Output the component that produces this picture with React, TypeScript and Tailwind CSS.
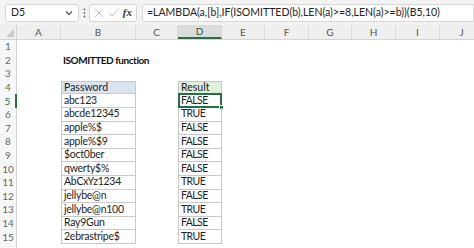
import React from "react";

const COLS = [
  { k: "A", w: 44 },
  { k: "B", w: 75 },
  { k: "C", w: 42 },
  { k: "D", w: 44 },
  { k: "E", w: 43 },
  { k: "F", w: 44 },
  { k: "G", w: 43 },
  { k: "H", w: 44 },
  { k: "I", w: 44 },
  { k: "J", w: 44 },
];

const DATA: [string, string][] = [
  ["abc123", "FALSE"],
  ["abcde12345", "TRUE"],
  ["apple%$", "FALSE"],
  ["apple%$9", "FALSE"],
  ["$oct0ber", "FALSE"],
  ["qwerty$%", "FALSE"],
  ["AbCxYz1234", "TRUE"],
  ["jellybe@n", "FALSE"],
  ["jellybe@n100", "TRUE"],
  ["Ray9Gun", "FALSE"],
  ["2ebrastripe$", "TRUE"],
];

const font = { fontFamily: "Lato, 'Liberation Sans', sans-serif" };

function Cell({ col, row }: { col: string; row: number }) {
  const w = COLS.find((c) => c.k === col)!.w;
  let content: React.ReactNode = null;
  let cls = "";
  if (col === "B" && row === 2) {
    content = (
      <span className="font-bold text-[10px] tracking-[-0.45px] text-[#111] whitespace-nowrap">
        ISOMITTED function
      </span>
    );
    cls = "overflow-visible whitespace-nowrap";
  }
  if (col === "B" && row === 4) {
    content = "Password";
    cls = "bg-[#dae4f0] border border-[#c8c8c8]";
  }
  if (col === "D" && row === 4) {
    content = "Result";
    cls = "bg-[#e1eedb] border border-[#c8c8c8]";
  }
  if (row >= 5 && row <= 15 && (col === "B" || col === "D")) {
    const d = DATA[row - 5];
    content =
      col === "B" ? (
        <span className="tracking-[-0.25px]">{d[0]}</span>
      ) : (
        <span className="tracking-[-0.6px]">{d[1]}</span>
      );
    cls = "border-x border-b border-[#c8c8c8]";
  }
  const selected = col === "D" && row === 5;
  return (
    <div
      className={`relative h-full shrink-0 flex items-center pl-[2px] text-[10.5px] text-[#1e1e1e] ${cls}`}
      style={{ width: w }}
    >
      {content}
      {selected && (
        <>
          <div className="absolute -inset-[1px] border-2 border-[#217346]" />
          <div className="absolute -right-[3px] -bottom-[3px] w-[5px] h-[5px] bg-[#217346] border border-white" />
        </>
      )}
    </div>
  );
}

export default function App() {
  const rows = Array.from({ length: 16 }, (_, i) => i + 1);
  return (
    <div className="w-[474px] h-[248px] overflow-hidden bg-white" style={font}>
      {/* formula bar */}
      <div className="h-[25px] bg-[#f3f3f3] flex items-center pl-[5px]">
        <div className="w-[74px] h-[18px] bg-white border border-[#d6d6d6] rounded-[3px] flex items-center pl-[5px] text-[10.5px] text-[#222]">
          <span className="flex-1">D5</span>
          <svg width="8" height="6" viewBox="0 0 8 6" className="mr-[5px]">
            <path d="M1 1.5 L4 4.5 L7 1.5" stroke="#444" strokeWidth="1.1" fill="none" />
          </svg>
        </div>
        <div className="w-[10px] flex justify-center">
          <svg width="3" height="10" viewBox="0 0 3 10">
            <circle cx="1.5" cy="1.5" r="0.9" fill="#666" />
            <circle cx="1.5" cy="5" r="0.9" fill="#666" />
            <circle cx="1.5" cy="8.5" r="0.9" fill="#666" />
          </svg>
        </div>
        <div className="w-[48px] h-[18px] bg-white border border-[#d6d6d6] rounded-[3px] flex items-center justify-between px-[4px]">
          <svg width="10" height="10" viewBox="0 0 10 10">
            <path d="M1 1 L9 9 M9 1 L1 9" stroke="#c4c4c4" strokeWidth="1" />
          </svg>
          <svg width="11" height="9" viewBox="0 0 11 9">
            <path d="M1 5 L4 8 L10 1" stroke="#c4c4c4" strokeWidth="1" fill="none" />
          </svg>
          <span
            className="italic font-bold text-[11px] text-[#333] leading-none"
            style={{ fontFamily: "'Liberation Serif', serif" }}
          >
            fx
          </span>
        </div>
        <div className="ml-[5px] flex-1 h-[18px] bg-white border border-[#d6d6d6] rounded-l-[3px] flex items-center pl-[4px] text-[10.5px] text-[#222] whitespace-nowrap">
          =LAMBDA(a,[b],IF(ISOMITTED(b),LEN(a)&gt;=8,LEN(a)&gt;=b))(B5,10)
        </div>
      </div>
      {/* column headers */}
      <div className="h-[15px] flex bg-[#efefef] border-b border-[#d4d4d4]">
        <div className="w-[17px] shrink-0 relative border-r border-[#d4d4d4]">
          <svg width="8" height="8" viewBox="0 0 8 8" className="absolute right-[2px] bottom-[2px]">
            <path d="M8 0 L8 8 L0 8 Z" fill="#c9c9c9" />
          </svg>
        </div>
        {COLS.map((c) => (
          <div
            key={c.k}
            className={`shrink-0 flex items-center justify-center text-[10px] border-r border-[#dadada] ${
              c.k === "D"
                ? "bg-[#dcdcdc] text-[#1f5c3a] border-b-2 border-b-[#217346]"
                : "text-[#555]"
            }`}
            style={{ width: c.w }}
          >
            {c.k}
          </div>
        ))}
      </div>
      {/* rows */}
      <div className="flex flex-col">
        {rows.map((r) => (
          <div key={r} className="h-[13.6px] flex shrink-0">
            <div
              className={`w-[17px] shrink-0 flex items-center justify-center text-[10px] bg-[#f7f7f7] border-r ${
                r === 5
                  ? "border-r-2 border-r-[#217346] text-[#217346] bg-[#e2e2e2]"
                  : "border-r-[#d4d4d4] text-[#666]"
              }`}
            >
              {r <= 15 ? r : ""}
            </div>
            {COLS.map((c) => (
              <Cell key={c.k} col={c.k} row={r} />
            ))}
          </div>
        ))}
      </div>
    </div>
  );
}
